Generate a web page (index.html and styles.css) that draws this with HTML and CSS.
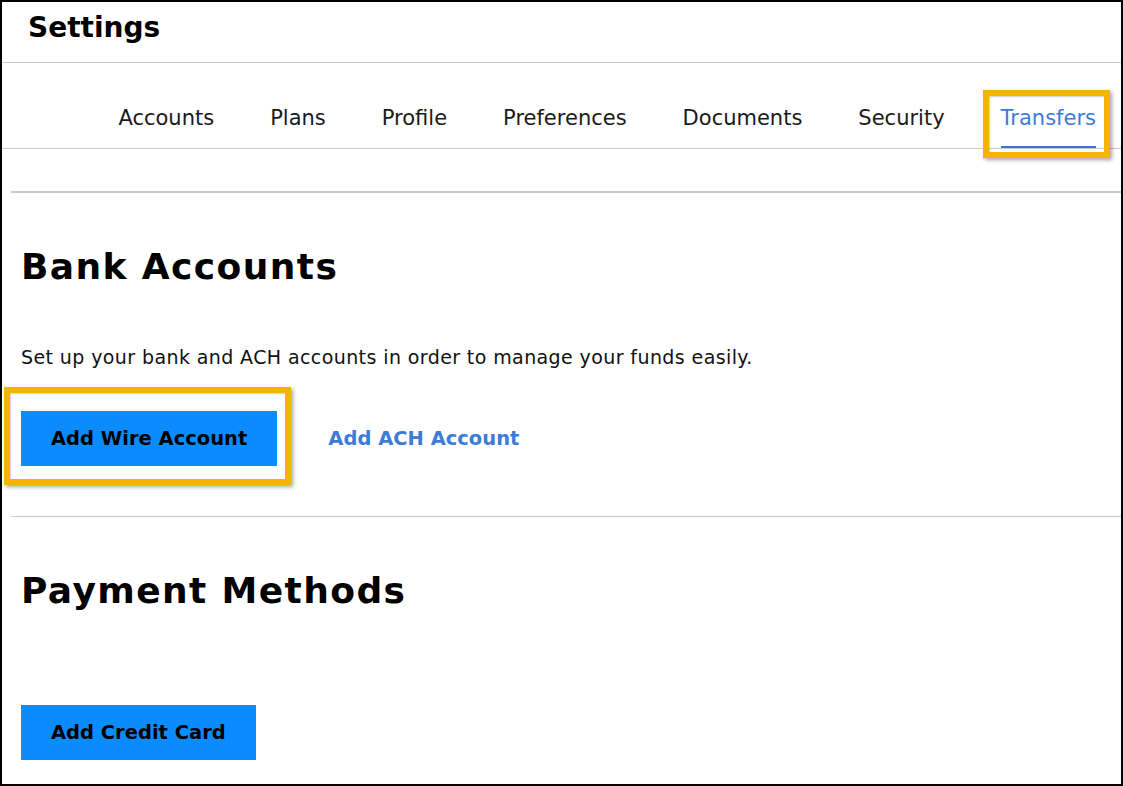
FILE: index.html
```html
<!DOCTYPE html>
<html lang="en">
<head>
    <meta charset="UTF-8">
    <meta name="viewport" content="width=device-width, initial-scale=1.0">
    <title>Settings - Transfers</title>
    <link rel="stylesheet" href="styles.css">
</head>
<body>
    <div class="frame">
        <!-- Page title -->
        <header class="top-bar">
            <h1>Settings</h1>
        </header>

        <!-- Settings tabs -->
        <nav class="tabs">
            <a class="tab" href="#">Accounts</a>
            <a class="tab" href="#">Plans</a>
            <a class="tab" href="#">Profile</a>
            <a class="tab" href="#">Preferences</a>
            <a class="tab" href="#">Documents</a>
            <a class="tab" href="#">Security</a>
            <a class="tab active" href="#">Transfers<span class="callout callout-tab"></span></a>
        </nav>

        <main class="content">
            <!-- Bank accounts -->
            <section class="section bank">
                <h2>Bank Accounts</h2>
                <p>Set up your bank and ACH accounts in order to manage your funds easily.</p>
                <div class="actions">
                    <button class="btn" type="button">Add Wire Account<span class="callout callout-btn"></span></button>
                    <a class="link" href="#">Add ACH Account</a>
                </div>
            </section>

            <!-- Payment methods -->
            <section class="section payment">
                <h2>Payment Methods</h2>
                <div class="actions">
                    <button class="btn" type="button">Add Credit Card</button>
                </div>
            </section>
        </main>
    </div>
</body>
</html>
```

FILE: styles.css
```css
/* Base */
html, body {
    margin: 0;
    padding: 0;
    background-color: #fff;
}

body {
    font-family: "DejaVu Sans", sans-serif;
    color: #000;
}

.frame {
    width: 1123px;
    height: 786px;
    box-sizing: border-box;
    border: 2px solid #000;
    overflow: hidden;
}

/* Header */
.top-bar {
    height: 61px;
    box-sizing: border-box;
    padding: 9px 0 0 26px;
    border-bottom: 1px solid #cccccc;
}

.top-bar h1 {
    margin: 0;
    font-size: 28px;
    line-height: 34px;
    font-weight: bold;
}

/* Tabs */
.tabs {
    display: flex;
    justify-content: flex-end;
    gap: 56px;
    height: 86px;
    box-sizing: border-box;
    padding-right: 25px;
    border-bottom: 1px solid #cccccc;
}

.tab {
    position: relative;
    display: block;
    box-sizing: border-box;
    height: 85px;
    padding-top: 43px;
    font-size: 21px;
    line-height: 24px;
    color: #1a1a1a;
    text-decoration: none;
    border-bottom: 2px solid transparent;
}

.tab.active {
    color: #3d7bd9;
    border-bottom-color: #3a72cf;
}

/* Yellow annotation boxes */
.callout {
    position: absolute;
    border: 6px solid #f5b400;
    box-shadow: 2px 2px 4px rgba(0, 0, 0, 0.35), inset 1px 1px 2px rgba(0, 0, 0, 0.2);
    pointer-events: none;
}

.callout-tab {
    left: -18px;
    right: -14px;
    top: 27px;
    bottom: -12px;
}

.callout-btn {
    left: -17px;
    right: -14px;
    top: -24px;
    bottom: -19px;
}

/* Content */
.content {
    margin: 42px 0 0 9px;
}

.section {
    padding-left: 10px;
    border-top: 2px solid #c8c8c8;
}

.section.payment {
    border-top-width: 1px;
}

.section h2 {
    margin: 0;
    font-size: 36px;
    line-height: 42px;
    letter-spacing: 1.4px;
    font-weight: bold;
}

.bank h2 {
    margin-top: 53px;
}

.bank p {
    margin: 57px 0 0;
    font-size: 19px;
    line-height: 24px;
    letter-spacing: 0.4px;
    color: #111;
}

.bank .actions {
    margin-top: 42px;
    padding-bottom: 50px;
}

.payment h2 {
    margin-top: 53px;
}

.payment .actions {
    margin-top: 93px;
}

.actions {
    display: flex;
    align-items: center;
    gap: 51px;
}

.btn {
    position: relative;
    height: 55px;
    padding: 0 30px;
    border: none;
    border-radius: 0;
    background-color: #0a8cff;
    color: #000;
    font-family: "DejaVu Sans", sans-serif;
    font-size: 19.5px;
    font-weight: bold;
    cursor: pointer;
}

.link {
    font-size: 19.5px;
    font-weight: bold;
    color: #3d7bd9;
    text-decoration: none;
}
```
